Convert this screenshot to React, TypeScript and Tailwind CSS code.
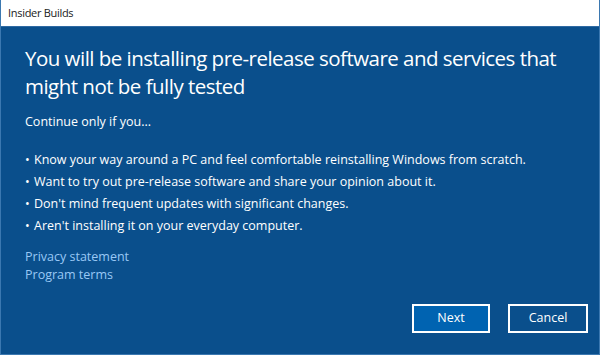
import React from "react";

export default function App() {
  const bullets = [
    "Know your way around a PC and feel comfortable reinstalling Windows from scratch.",
    "Want to try out pre-release software and share your opinion about it.",
    "Don't mind frequent updates with significant changes.",
    "Aren't installing it on your everyday computer.",
  ];
  return (
    <div
      className="w-[600px] h-[355px] flex flex-col bg-[#0a4f8c] border-x border-b border-[#3b78b0] overflow-hidden"
      style={{ fontFamily: '"Open Sans", "Noto Sans", sans-serif' }}
    >
      <div className="h-[27px] shrink-0 bg-white border-b border-[#2f6aa3] flex items-center px-[7px] text-[11px] tracking-[-0.3px] text-[#1a1a1a]">
        Insider Builds
      </div>
      <div className="flex-1 flex flex-col pl-[24px] pr-[11px] text-white">
        <h1 className="mt-[17px] text-[20.5px] leading-[28px] font-normal tracking-[-0.52px]">
          You will be installing pre-release software and services that might not be fully tested
        </h1>
        <p className="mt-[13px] text-[12.5px] leading-[18px]">Continue only if you...</p>
        <ul className="mt-[18px] flex flex-col">
          {bullets.map((b) => (
            <li key={b} className="flex text-[12.5px] leading-[22px]">
              <span className="w-[9px] shrink-0">•</span>
              <span>{b}</span>
            </li>
          ))}
        </ul>
        <div className="mt-[11px] flex flex-col text-[12.5px] leading-[18px] text-[#99c8f5]">
          <span>Privacy statement</span>
          <span>Program terms</span>
        </div>
        <div className="mt-auto mb-[21px] flex justify-end gap-[18px]">
          <button className="w-[78px] h-[29px] border-2 border-white bg-[#0063b1] text-white text-[12.5px]">
            Next
          </button>
          <button className="w-[80px] h-[29px] border-2 border-white bg-transparent text-white text-[12.5px]">
            Cancel
          </button>
        </div>
      </div>
    </div>
  );
}
